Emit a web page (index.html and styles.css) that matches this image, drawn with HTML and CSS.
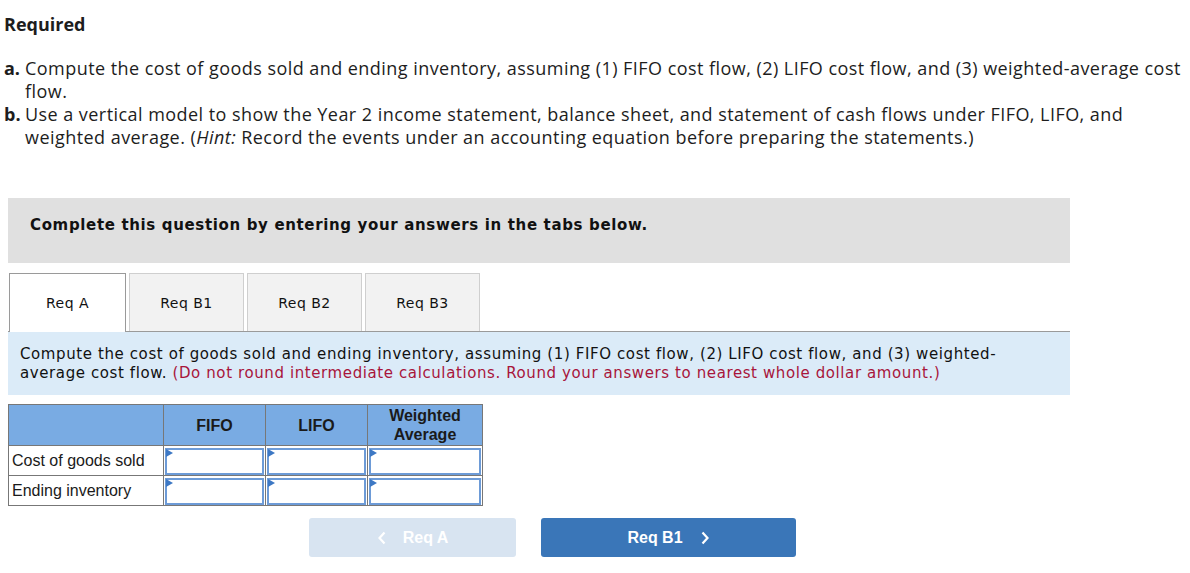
FILE: index.html
```html
<!DOCTYPE html>
<html>
<head>
<meta charset="utf-8">
<link rel="stylesheet" href="styles.css">
</head>
<body>
<div class="required">
  <h2 class="req-title">Required</h2>
  <ol class="req-list">
    <li><span class="marker">a.</span><span class="item-text">Compute the cost of goods sold and ending inventory, assuming (1) FIFO cost flow, (2) LIFO cost flow, and (3) weighted-average cost flow.</span></li>
    <li><span class="marker">b.</span><span class="item-text">Use a vertical model to show the Year 2 income statement, balance sheet, and statement of cash flows under FIFO, LIFO, and weighted average. (<i>Hint:</i> Record the events under an accounting equation before preparing the statements.)</span></li>
  </ol>
</div>
<div class="question">
  <div class="banner">Complete this question by entering your answers in the tabs below.</div>
  <div class="tabs">
    <div class="tab active">Req A</div>
    <div class="tab">Req B1</div>
    <div class="tab">Req B2</div>
    <div class="tab">Req B3</div>
  </div>
  <div class="instructions">Compute the cost of goods sold and ending inventory, assuming (1) FIFO cost flow, (2) LIFO cost flow, and (3) weighted-average cost flow. <span class="note">(Do not round intermediate calculations. Round your answers to nearest whole dollar amount.)</span></div>
  <table class="grid">
    <thead>
      <tr>
        <th class="label-col"></th>
        <th class="c1">FIFO</th>
        <th class="c2">LIFO</th>
        <th class="c3">Weighted<br>Average</th>
      </tr>
    </thead>
    <tbody>
      <tr>
        <td class="label">Cost of goods sold</td>
        <td class="input"><div class="box"></div></td>
        <td class="input"><div class="box"></div></td>
        <td class="input"><div class="box"></div></td>
      </tr>
      <tr>
        <td class="label">Ending inventory</td>
        <td class="input"><div class="box"></div></td>
        <td class="input"><div class="box"></div></td>
        <td class="input"><div class="box"></div></td>
      </tr>
    </tbody>
  </table>
  <div class="nav">
    <div class="btn prev"><svg class="chev" width="10" height="14" viewBox="0 0 10 14"><path d="M7.5 1.5 L2.5 7 L7.5 12.5" fill="none" stroke="#fff" stroke-width="2.2"/></svg><span>Req A</span></div>
    <div class="btn next"><span>Req B1</span><svg class="chev" width="10" height="14" viewBox="0 0 10 14"><path d="M2.5 1.5 L7.5 7 L2.5 12.5" fill="none" stroke="#fff" stroke-width="2.2"/></svg></div>
  </div>
</div>
</body>
</html>
```
FILE: styles.css
```css
html, body {
  margin: 0;
  padding: 0;
  background: #fff;
}
body {
  font-family: "Open Sans", "Liberation Sans", sans-serif;
  color: #1d1d1d;
}
.required {
  padding: 13px 0 0 4px;
}
.req-title {
  margin: 0;
  font-size: 18px;
  line-height: 23px;
  font-weight: 700;
}
.req-list {
  list-style: none;
  margin: 21px 0 0 0;
  padding: 0;
  font-size: 18px;
  line-height: 23px;
  letter-spacing: 0.45px;
}
.req-list li {
  display: flex;
}
.marker {
  font-weight: 700;
  width: 21px;
  flex: none;
  letter-spacing: 0;
}
.item-text {
  flex: 1;
}
.question {
  margin: 49px 0 0 8px;
  width: 1062px;
  font-family: "DejaVu Sans", Verdana, sans-serif;
}
.banner {
  background: #e0e0e0;
  height: 65px;
  box-sizing: border-box;
  padding: 17px 0 0 22px;
  font-size: 15px;
  font-weight: 700;
  line-height: 20px;
  color: #111;
  letter-spacing: 0.65px;
}
.tabs {
  display: flex;
  gap: 3px;
  margin-top: 10px;
  padding-left: 1px;
  border-bottom: 1px solid #9a9a9a;
}
.tab {
  width: 115px;
  height: 58px;
  box-sizing: border-box;
  border: 1px solid #cfcfcf;
  border-bottom: none;
  background: #f2f2f2;
  display: flex;
  align-items: center;
  justify-content: center;
  font-size: 14px;
  color: #111;
  letter-spacing: 0.5px;
}
.tab.active {
  background: #fff;
  border: 1px solid #9a9a9a;
  border-bottom: none;
  height: 59px;
  margin-bottom: -1px;
  width: 117px;
}
.instructions {
  background: #dbebf8;
  padding: 13px 12px 12px 12px;
  font-size: 15px;
  line-height: 19px;
  color: #111;
  letter-spacing: 0.6px;
}
.note {
  color: #a8153b;
}
.grid {
  margin-top: 9px;
  border-collapse: collapse;
  font-family: "Liberation Sans", Arial, sans-serif;
  font-size: 16px;
}
.grid th {
  background: #79abe3;
  border: 1px solid #777;
  height: 40px;
  padding: 0;
  font-weight: 700;
  color: #1a1a1a;
  line-height: 19px;
}
.label-col { width: 154px; }
.c1, .c2 { width: 101px; }
.c3 { width: 114px; }
.grid td {
  border: 1px solid #777;
  padding: 0;
  height: 28px;
}
.grid td.label {
  padding-left: 3px;
  color: #1a1a1a;
}
.grid td.input {
  padding: 1px 1px 0 1px;
}
.box {
  position: relative;
  height: 23px;
  border: 2px solid #6d9bd7;
  background: #fff;
}
.box::before {
  content: "";
  position: absolute;
  left: -1px;
  top: -1px;
  border-left: 7px solid #3d78c4;
  border-top: 4px solid transparent;
  border-bottom: 4px solid transparent;
}
.nav {
  display: flex;
  gap: 25px;
  margin-top: 12px;
  padding-left: 301px;
  font-family: "Liberation Sans", Arial, sans-serif;
}
.btn {
  height: 39px;
  border-radius: 3px;
  display: flex;
  align-items: center;
  justify-content: center;
  font-size: 16px;
  font-weight: 700;
  color: #fff;
}
.btn.prev {
  width: 207px;
  background: #d8e4f1;
  gap: 16px;
}
.btn.next {
  width: 255px;
  background: #3a76b8;
  gap: 17px;
}
.chev {
  display: block;
}
```
